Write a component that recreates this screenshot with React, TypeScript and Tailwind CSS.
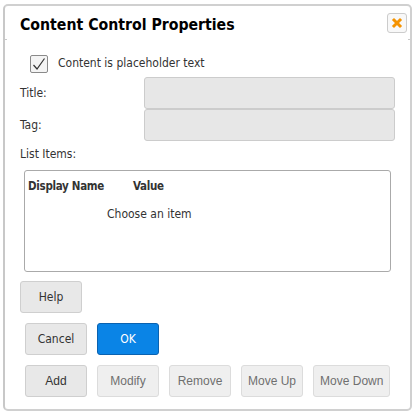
import React from "react";

const F = "[font-family:'DejaVu_Sans_Condensed','DejaVu_Sans',sans-serif]";

function LButton({ label, off }: { label: string; off?: boolean }) {
  return (
    <button
      className={`h-[32px] min-w-[62px] shrink-0 whitespace-nowrap rounded-[3px] border px-[6px] text-[12px] [font-family:'Liberation_Sans',Arial,sans-serif] ${
        off
          ? "border-[#dcdcdc] bg-[#efefef] text-[#6f6f6f]"
          : "border-[#cfcfcf] bg-[#e8e8e8] text-[#333333]"
      }`}
    >
      {label}
    </button>
  );
}

function DButton({ label }: { label: string }) {
  return (
    <button className="h-[32px] w-[62px] rounded-[3px] border border-[#cfcfcf] bg-[#e8e8e8] text-[12px] text-[#333333]">
      {label}
    </button>
  );
}

export default function App() {
  return (
    <div className={`h-[413px] w-[415px] bg-white pl-[3px] pr-[3px] pt-[4px] ${F}`}>
      <div className="relative h-[407px] w-[409px] rounded-[5px] border-2 border-[#d0d0d0] border-l-[#c8c8c8] bg-white">
        <span className="absolute left-0 top-[33px] h-[1px] w-[2px] bg-[#c8c8c8]" />
        <span className="absolute right-0 top-[33px] h-[1px] w-[2px] bg-[#c8c8c8]" />
        <div className="flex h-[35px] items-start justify-between pl-[15px] pr-[3px] pt-[7px]">
          <h1 className="text-[15.7px] font-bold leading-[24px] text-black">Content Control Properties</h1>
          <button className="flex h-[20px] w-[20px] items-center justify-center rounded-[3px] border border-[#cccccc] bg-[#f8f8f8]">
            <svg width="12" height="12" viewBox="0 0 12 12" aria-hidden="true">
              <path d="M3 3 L9 9 M9 3 L3 9" stroke="#f59300" strokeWidth="3" strokeLinecap="square" />
            </svg>
          </button>
        </div>
        <div className="px-[15px] text-[12px] text-[#333333]">
          <div className="box-content flex h-[20px] items-center pl-[10px] pt-[12px]">
            <span className="mt-[2px] flex h-[18px] w-[18px] items-center justify-center rounded-[2px] border border-[#8a8a8a] bg-[#f4f4f4]">
              <svg width="14" height="14" viewBox="0 0 14 14" aria-hidden="true">
                <path d="M1.5 8 L5 12 L12.5 1.5" fill="none" stroke="#333333" strokeWidth="1.2" />
              </svg>
            </span>
            <span className="ml-[10px]">Content is placeholder text</span>
          </div>
          <div className="mt-[4px] flex h-[32px]">
            <label className="w-[124px] pt-[7px]">Title:</label>
            <div className="h-[32px] w-[251px] rounded-[3px] border border-[#cccccc] bg-[#e7e7e7]" />
          </div>
          <div className="flex h-[32px]">
            <label className="w-[124px] pt-[7px]">Tag:</label>
            <div className="h-[32px] w-[251px] rounded-[3px] border border-[#cccccc] bg-[#e7e7e7]" />
          </div>
          <div className="mt-[1px] h-[24px] leading-[24px]">List Items:</div>
          <div className="ml-[4px] mt-[4px] h-[102px] w-[367px] rounded-[3px] border border-[#aaaaaa] px-[3px] pt-[7px]">
            <div className="flex text-[11.5px] font-bold leading-[16px] tracking-[-0.3px]">
              <span className="w-[105px]">Display Name</span>
              <span>Value</span>
            </div>
            <div className="mt-[12px] pl-[79px] leading-[16px]">Choose an item</div>
          </div>
          <div className="mt-[9px]"><DButton label="Help" /></div>
          <div className="ml-[5px] mt-[10px] flex gap-[10px]">
            <DButton label="Cancel" />
            <button className="h-[32px] w-[62px] rounded-[3px] border border-[#0a62b0] bg-[#0a84e6] text-[12px] text-white">OK</button>
          </div>
          <div className="ml-[5px] mt-[10px] flex gap-[10px]">
            <LButton label="Add" />
            <LButton label="Modify" off />
            <LButton label="Remove" off />
            <LButton label="Move Up" off />
            <LButton label="Move Down" off />
          </div>
        </div>
      </div>
    </div>
  );
}
